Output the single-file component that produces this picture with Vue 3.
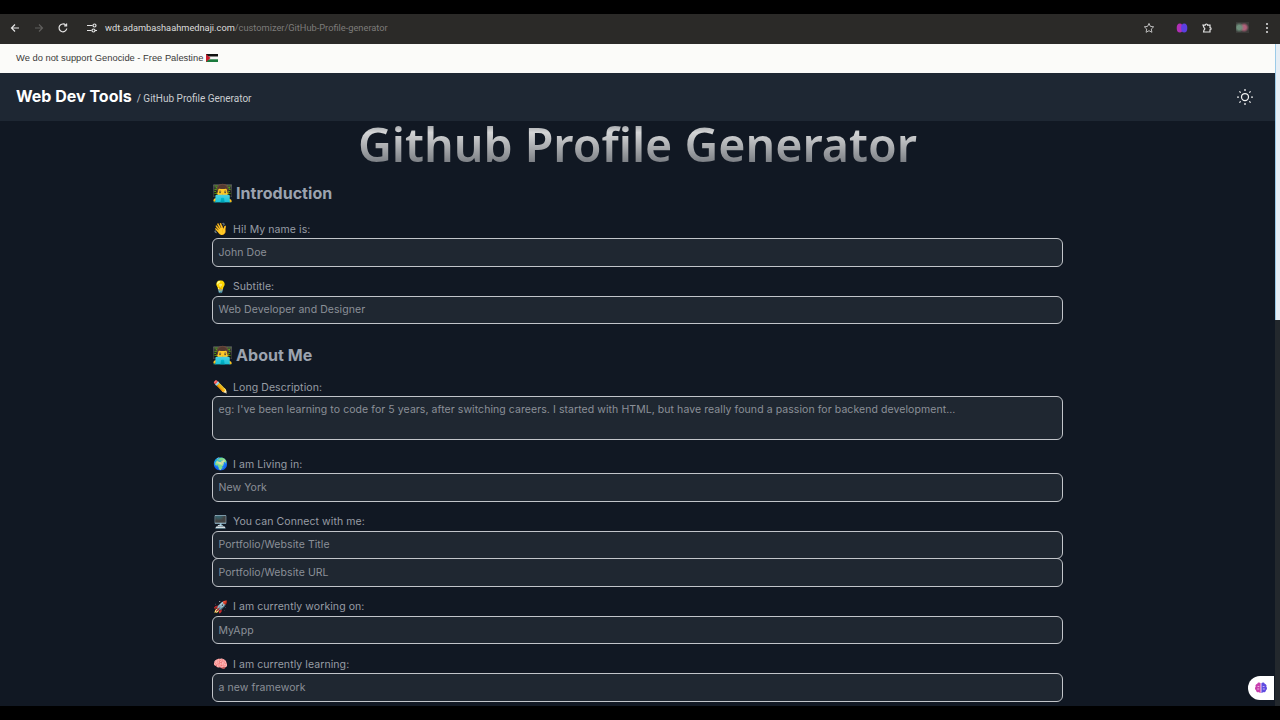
<script setup>
const intro = [
  { icon: '👋', label: 'Hi! My name is:', inputs: ['John Doe'] },
  { icon: '💡', label: 'Subtitle:', inputs: ['Web Developer and Designer'] },
];
const about = [
  { icon: '🌍', label: 'I am Living in:', inputs: ['New York'] },
  { icon: '🖥️', label: 'You can Connect with me:', inputs: ['Portfolio/Website Title', 'Portfolio/Website URL'] },
  { icon: '🚀', label: 'I am currently working on:', inputs: ['MyApp'] },
  { icon: '🧠', label: 'I am currently learning:', inputs: ['a new framework'] },
];
</script>

<template>
  <div class="screen">
    <div class="browser">
      <div class="nav-btns">
        <svg class="ico" viewBox="0 0 12 12"><path d="M10 6H2.5M6 2.5 2.5 6 6 9.5" /></svg>
        <svg class="ico dim" viewBox="0 0 12 12"><path d="M2 6h7.5M6 2.5 9.5 6 6 9.5" /></svg>
        <svg class="ico" viewBox="0 0 12 12"><path d="M9.8 6.5A3.9 3.9 0 1 1 8.8 3.2M9.6 1.4v2.4H7.2" /></svg>
        <svg class="ico tune" viewBox="0 0 12 12"><path d="M1 3.5h5.5M9 8.5h2M1 8.5h4.5" /><circle cx="8.5" cy="3.5" r="1.5" /><circle cx="7.5" cy="8.5" r="1.5" /></svg>
      </div>
      <div class="url">wdt.adambashaahmednaji.com<span>/customizer/GitHub-Profile-generator</span></div>
      <div class="browser-right">
        <svg class="ico star" viewBox="0 0 12 12"><path d="M6 1.4 7.4 4.4 10.7 4.8 8.3 7 8.9 10.3 6 8.7 3.1 10.3 3.7 7 1.3 4.8 4.6 4.4Z" /></svg>
        <svg class="ext-brain" viewBox="0 0 12 12"><ellipse cx="3.8" cy="6" rx="3.1" ry="4.6" fill="#b02fb5" /><ellipse cx="8.2" cy="6" rx="3.1" ry="4.6" fill="#5b3fe0" /></svg>
        <svg class="ico puzzle" viewBox="0 0 12 12"><path d="M2 3.2h2.2a1.2 1.2 0 0 1 2.4 0H9v2.4a1.1 1.1 0 0 1 0 2.2v2.2H2.6L3 8a1.3 1.3 0 0 0 0-2.4L2 3.2Z" /></svg>
        <div class="avatar"></div>
        <div class="dots"><i></i><i></i><i></i></div>
      </div>
    </div>
    <div class="viewport">
      <div class="page">
        <div class="notice">We do not support Genocide - Free Palestine <svg class="flag" viewBox="0 0 12 8"><rect width="12" height="2.7" fill="#111" /><rect y="2.7" width="12" height="2.6" fill="#f4f4f4" /><rect y="5.3" width="12" height="2.7" fill="#1b7a3d" /><path d="M0 0 4.5 4 0 8Z" fill="#c8202f" /></svg></div>
        <header class="topbar">
          <div class="brand"><strong>Web Dev Tools</strong><span>/ GitHub Profile Generator</span></div>
          <svg class="sun" viewBox="0 0 24 24"><circle cx="12" cy="12" r="4.2" /><path d="M12 2.5v2.2M12 19.3v2.2M2.5 12h2.2M19.3 12h2.2M5.3 5.3l1.5 1.5M17.2 17.2l1.5 1.5M5.3 18.7l1.5-1.5M17.2 6.8l1.5-1.5" /></svg>
        </header>
        <main class="content">
          <h1>Github Profile Generator</h1>
          <form class="form">
            <h2><span class="emoji big">👨‍💻</span>Introduction</h2>
            <div v-for="f in intro" :key="f.label" class="field">
              <label><span class="emoji">{{ f.icon }}</span>{{ f.label }}</label>
              <div v-for="p in f.inputs" :key="p" class="input">{{ p }}</div>
            </div>
            <h2 class="second"><span class="emoji big">👨‍💻</span>About Me</h2>
            <div class="field">
              <label><span class="emoji">✏️</span>Long Description:</label>
              <div class="input area">eg: I've been learning to code for 5 years, after switching careers. I started with HTML, but have really found a passion for backend development...</div>
            </div>
            <div v-for="f in about" :key="f.label" class="field">
              <label><span class="emoji">{{ f.icon }}</span>{{ f.label }}</label>
              <div v-for="p in f.inputs" :key="p" class="input">{{ p }}</div>
            </div>
          </form>
        </main>
        <div class="float-btn">
          <svg viewBox="0 0 14 14">
            <path d="M6.6 2.2C5.6.9 3.6 1.3 3.3 2.8 1.8 3 1 4.6 1.7 5.8.6 6.800.8 8.600 2 9.200c0 1.600 1.700 2.600 3 1.900.5.900 1 1.100 1.600.9Z" fill="#c83fae" />
            <path d="M7.400 2.200c1-1.300 3-.9 3.300.6 1.500.2 2.300 1.800 1.600 3 1.100 1 .9 2.800-.3 3.400 0 1.600-1.700 2.600-3 1.900-.5.900-1 1.100-1.600.9Z" fill="#5f4be0" />
            <path d="M3.500 5.500h1.800M3.200 8h2M8.700 5.500h1.800M8.800 8h2" stroke="#fff" stroke-width=".6" fill="none" />
          </svg>
        </div>
      </div>
      <div class="scrollbar"><div class="thumb"></div></div>
    </div>
  </div>
</template>

<style>
html, body { background: #000; overflow: hidden; }
</style>

<style scoped>
.screen {
  width: 1280px;
  height: 720px;
  display: flex;
  flex-direction: column;
  padding: 14px 0;
  box-sizing: border-box;
  background: #000;
  overflow: hidden;
  font-family: Inter, "Noto Sans", sans-serif;
}
.browser {
  height: 30px;
  flex: none;
  display: flex;
  align-items: center;
  box-sizing: border-box;
  padding-bottom: 3px;
  background: #2b2a28;
  color: #e6e6e6;
  font-family: Roboto, "Liberation Sans", sans-serif;
}
.nav-btns {
  display: flex;
  align-items: center;
  gap: 12px;
  padding-left: 9px;
}
.ico {
  width: 12px;
  height: 12px;
  fill: none;
  stroke: #e4e4e4;
  stroke-width: 1.2;
  flex: none;
}
.ico.dim { stroke: #5f5e5c; }
.ico.tune { margin-left: 5px; }
.url {
  margin-left: 7px;
  font-size: 9.25px;
  color: #dcdcdc;
}
.url span { color: #7d7c7a; }
.browser-right {
  margin-left: auto;
  display: flex;
  align-items: center;
  padding-right: 9px;
}
.star { margin-right: 21px; stroke: #bdbdbd; stroke-width: 1; }
.ext-brain { width: 12px; height: 12px; margin-right: 13px; }
.puzzle { margin-right: 23px; }
.avatar {
  width: 13px;
  height: 11px;
  background:
    radial-gradient(circle at 25% 50%, #6f8f7c 0 18%, transparent 45%),
    radial-gradient(circle at 62% 50%, #b0607a 0 22%, transparent 50%),
    #3a3a38;
  filter: blur(0.6px);
  margin-right: 17px;
}
.dots {
  display: flex;
  flex-direction: column;
  gap: 2px;
  width: 2px;
  margin-right: 3px;
}
.dots i { width: 2px; height: 2px; background: #e4e4e4; border-radius: 50%; }
.viewport {
  flex: 1;
  min-height: 0;
  display: flex;
}
.page {
  flex: 1;
  min-width: 0;
  display: flex;
  flex-direction: column;
  background: #111823;
  position: relative;
  overflow: hidden;
}
.notice {
  height: 29px;
  flex: none;
  display: flex;
  align-items: center;
  gap: 3px;
  box-sizing: border-box;
  padding: 0 0 1px 16px;
  background: #fbfbf9;
  color: #3a3a3a;
  font-family: "Liberation Sans", sans-serif;
  font-size: 9.35px;
}
.flag { width: 12px; height: 8px; }
.topbar {
  height: 48px;
  flex: none;
  display: flex;
  align-items: center;
  justify-content: space-between;
  padding: 0 20px 0 16px;
  background: #1e2733;
}
.brand {
  display: flex;
  align-items: baseline;
  gap: 5px;
  color: #fff;
  margin-top: -2px;
}
.brand strong { font-size: 16px; font-weight: 700; }
.brand span { font-size: 10px; color: #c9ccd0; font-family: Roboto, sans-serif; }
.sun {
  width: 20px;
  height: 20px;
  fill: none;
  stroke: #f2f2f2;
  stroke-width: 1.5;
}
.content {
  display: flex;
  flex-direction: column;
  align-items: center;
}
h1 {
  margin: 0;
  font-family: "Noto Sans", sans-serif;
  font-size: 46.6px;
  line-height: 46px;
  font-weight: 600;
  background: linear-gradient(180deg, #8a8d92, #d4d5d6 25%, #6e7278);
  -webkit-background-clip: text;
  background-clip: text;
  color: transparent;
}
.form {
  width: 851px;
  display: flex;
  flex-direction: column;
}
h2 {
  margin: 15px 0 0;
  display: flex;
  align-items: center;
  gap: 4px;
  font-size: 16px;
  line-height: 22px;
  font-weight: 700;
  letter-spacing: 0.05px;
  color: #9ca3af;
}
h2.second { margin-top: 20px; }
.emoji {
  font-family: "Noto Color Emoji", sans-serif;
  font-size: 12px;
  width: 14px;
  margin-right: 6px;
  text-align: center;
  line-height: 1;
}
.emoji.big { font-size: 17px; width: 20px; margin-right: 0; }
.field {
  margin-top: 12.1px;
  display: flex;
  flex-direction: column;
}
h2 + .field { margin-top: 17px; }
h2.second + .field { margin-top: 13px; }
label {
  display: flex;
  align-items: center;
  box-sizing: border-box;
  padding: 0 0 1px 1px;
  height: 17px;
  font-size: 10.5px;
  letter-spacing: 0.08px;
  color: #989da5;
}
.input {
  height: 28.5px;
  box-sizing: border-box;
  display: flex;
  align-items: center;
  padding: 0 5.5px;
  border: 1px solid #c2c5ca;
  border-radius: 6px;
  background: #1f2731;
  color: #8b9098;
  font-size: 10.5px;
  letter-spacing: 0.07px;
}
.input + .input { margin-top: -1px; }
.area {
  height: 43.5px;
  align-items: flex-start;
  padding-top: 6px;
  margin-bottom: 4.4px;
}
.float-btn {
  position: absolute;
  right: 1px;
  bottom: 6px;
  width: 26px;
  height: 24px;
  background: #fff;
  border-radius: 12px 0 0 12px;
  display: flex;
  align-items: center;
  justify-content: center;
}
.float-btn svg { width: 14px; height: 14px; }
.scrollbar {
  width: 5px;
  flex: none;
  background: #23282d;
}
.thumb {
  height: 276px;
  background: #e6eef5;
  border-left: 1px solid #9ccbe8;
  box-sizing: border-box;
}
</style>
